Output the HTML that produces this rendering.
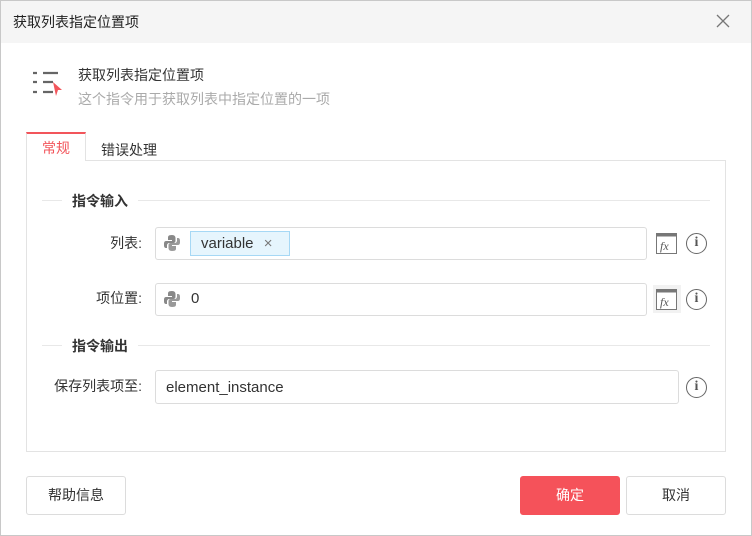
<!DOCTYPE html><html><head><meta charset="utf-8"><style>
*{box-sizing:border-box;margin:0;padding:0}
body{width:752px;height:536px;background:#fff;font-family:"Liberation Sans","Noto Sans CJK SC",sans-serif;position:relative;overflow:hidden;color:#333}
.a{position:absolute}
.inp{position:absolute;border:1px solid #dcdcdc;border-radius:3px;background:#fff}
.lbl{position:absolute;font-size:14px;color:#333;text-align:right;width:130px;left:12px}
.sec{position:absolute;left:42px;width:668px;height:1px;background:#e8e8e8}
.sect{position:absolute;left:62px;background:#fff;padding:0 10px;font-size:14px;font-weight:bold;color:#333}
.btn{position:absolute;top:476px;height:39px;width:100px;border:1px solid #dcdcdc;border-radius:3px;font-size:14px;text-align:center;line-height:37px;background:#fff}
.fx{position:absolute;width:21px;height:21px}
.info{position:absolute;width:21px;height:21px;border:1.5px solid #666;border-radius:50%;font-size:14px;font-weight:bold;text-align:center;line-height:18px;color:#555;font-family:"Liberation Serif",serif}
</style></head><body>
<div class="a" style="left:0;top:0;width:752px;height:536px;border:1px solid #c8c8c8"></div>
<div class="a" style="left:1px;top:1px;width:750px;height:42px;background:#f5f5f5"></div>
<div class="a" style="left:13px;top:12px;font-size:14px;color:#222">获取列表指定位置项</div>
<svg class="a" style="left:715px;top:13px" width="16" height="16"><path d="M2 2L14 14M14 2L2 14" stroke="#777" stroke-width="1.3"/></svg>
<svg class="a" style="left:32px;top:68px" width="32" height="32"><g stroke="#666" stroke-width="2.2"><path d="M1 5h4M11 5h15M1 14h4M11 14h10M1 24h4M11 24h10"/></g><path d="M21 14l9 8h-4l-2 6z" fill="#f2555b"/></svg>
<div class="a" style="left:78px;top:65px;font-size:14px;color:#333">获取列表指定位置项</div>
<div class="a" style="left:78px;top:89px;font-size:14px;color:#aaa">这个指令用于获取列表中指定位置的一项</div>
<div class="a" style="left:26px;top:160px;width:700px;height:292px;border:1px solid #e3e3e3"></div>
<div class="a" style="left:26px;top:132px;width:60px;height:29px;border:1px solid #e3e3e3;border-top:2px solid #f2555b;border-bottom:none;background:#fff;color:#f2555b;font-size:14px;text-align:center;line-height:28px">常规</div>
<div class="a" style="left:101px;top:140px;font-size:14px;color:#333">错误处理</div>
<div class="sec" style="top:200px"></div><div class="sect" style="top:191px">指令输入</div>
<div class="sec" style="top:345px"></div><div class="sect" style="top:336px">指令输出</div>
<div class="lbl" style="top:233px">列表:</div>
<div class="inp" style="left:155px;top:227px;width:492px;height:33px"></div>
<div class="lbl" style="top:288px">项位置:</div>
<div class="inp" style="left:155px;top:283px;width:492px;height:33px"></div>
<div class="lbl" style="top:376px">保存列表项至:</div>
<div class="inp" style="left:155px;top:370px;width:524px;height:34px"></div>
<div class="a" style="left:166px;top:379px;font-size:15px;color:#333">element_instance</div>
<svg class="a" style="left:163px;top:234px" width="18" height="18" viewBox="0 0 18 18"><path d="M9 1c-4 0-4 1.5-4 3v2h4v1H3c-2 0-2 2-2 3.5S1 14 3 14h1v-2.5c0-1.5 1-2.5 2.5-2.5h4c1.2 0 2-1 2-2V4c0-1.5-1-3-3.5-3z" fill="#888"/><path d="M9 17c4 0 4-1.5 4-3v-2H9v-1h6c2 0 2-2 2-3.5S17 4 15 4h-1v2.5c0 1.5-1 2.5-2.5 2.5h-4c-1.2 0-2 1-2 2V14c0 1.5 1 3 3.5 3z" fill="#999"/></svg>
<svg class="a" style="left:163px;top:290px" width="18" height="18" viewBox="0 0 18 18"><path d="M9 1c-4 0-4 1.5-4 3v2h4v1H3c-2 0-2 2-2 3.5S1 14 3 14h1v-2.5c0-1.5 1-2.5 2.5-2.5h4c1.2 0 2-1 2-2V4c0-1.5-1-3-3.5-3z" fill="#888"/><path d="M9 17c4 0 4-1.5 4-3v-2H9v-1h6c2 0 2-2 2-3.5S17 4 15 4h-1v2.5c0 1.5-1 2.5-2.5 2.5h-4c-1.2 0-2 1-2 2V14c0 1.5 1 3 3.5 3z" fill="#999"/></svg>
<div class="a" style="left:190px;top:231px;width:100px;height:25px;background:#e6f5fd;border:1px solid #a6d8f5;font-size:15px;line-height:23px;padding-left:10px;color:#333">variable <span style="color:#777;margin-left:6px">×</span></div>
<div class="a" style="left:191px;top:290px;font-size:15px;color:#333">0</div>
<svg class="fx" style="left:656px;top:233px" viewBox="0 0 21 21"><rect x="0.5" y="0.5" width="20" height="20" fill="#fff" stroke="#777"/><rect x="0.5" y="0.5" width="20" height="3" fill="#777"/><text x="4" y="17" font-size="12" font-style="italic" font-family="Liberation Serif,serif" fill="#555">fx</text></svg>
<div class="a" style="left:653px;top:285px;width:28px;height:28px;background:#f2f2f2"></div>
<svg class="fx" style="left:656px;top:289px" viewBox="0 0 21 21"><rect x="0.5" y="0.5" width="20" height="20" fill="#fff" stroke="#777"/><rect x="0.5" y="0.5" width="20" height="3" fill="#777"/><text x="4" y="17" font-size="12" font-style="italic" font-family="Liberation Serif,serif" fill="#555">fx</text></svg>
<div class="info" style="left:686px;top:233px">i</div>
<div class="info" style="left:686px;top:289px">i</div>
<div class="info" style="left:686px;top:377px">i</div>
<div class="btn" style="left:26px">帮助信息</div>
<div class="btn" style="left:520px;background:#f5525a;border-color:#f5525a;color:#fff">确定</div>
<div class="btn" style="left:626px">取消</div>
</body></html>
